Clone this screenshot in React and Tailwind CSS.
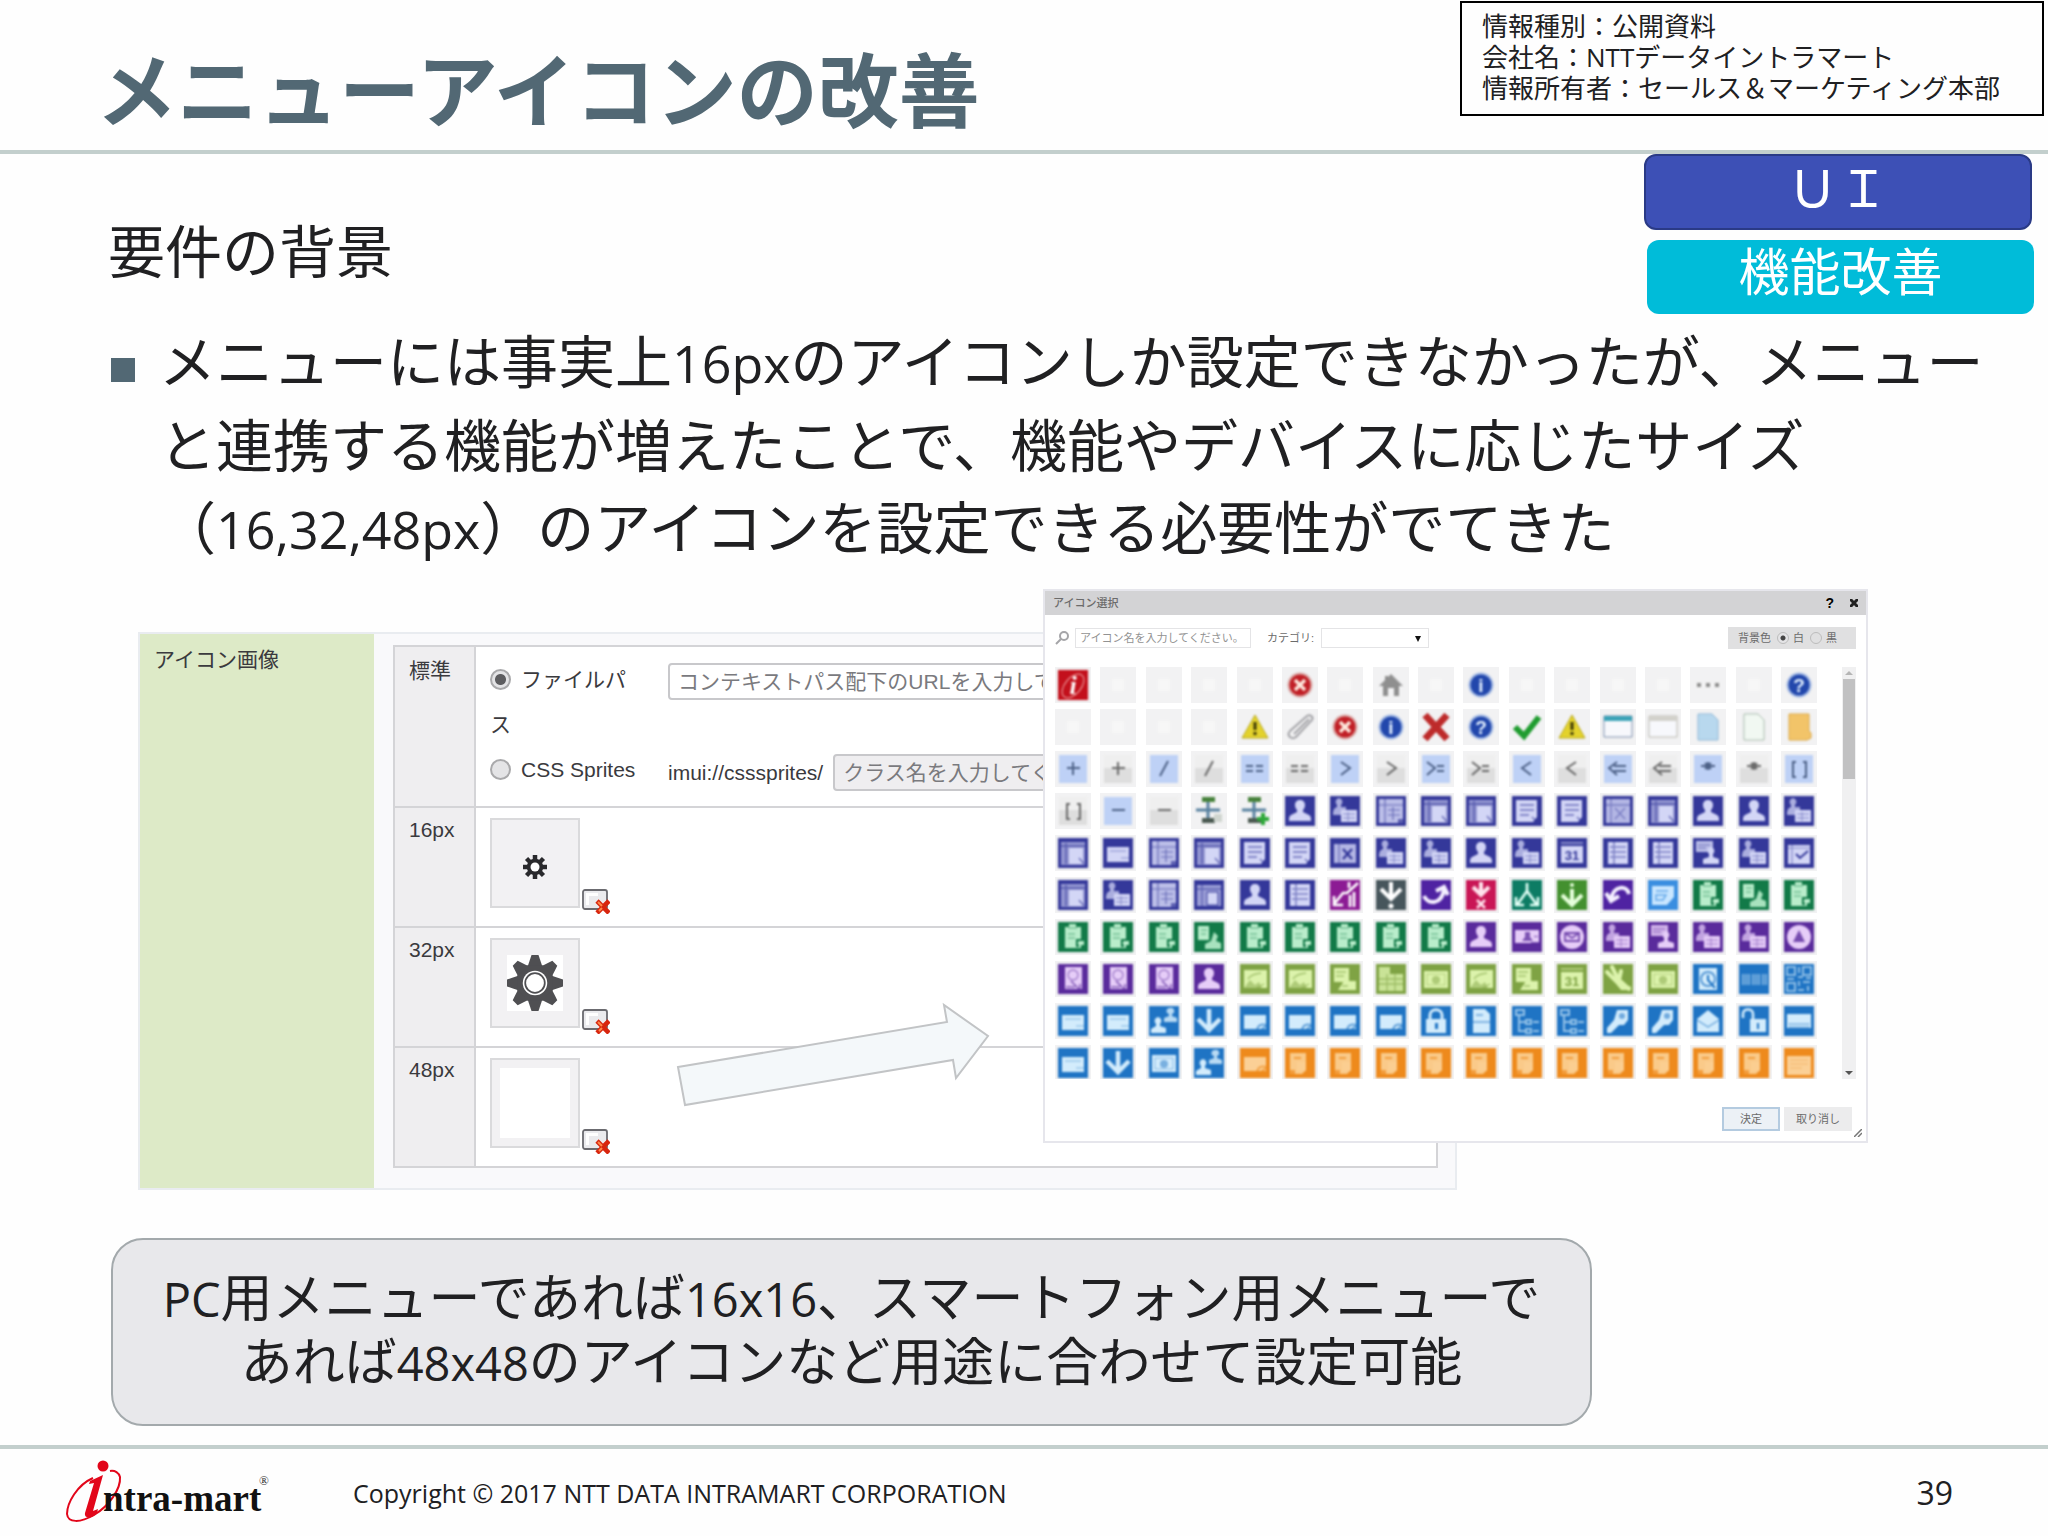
import React, { useState } from "react";
import clsx from "clsx";

const JP = "font-['Open_Sans','Noto_Sans_CJK_JP',sans-serif]";
const UI = "font-['Liberation_Sans','Noto_Sans_CJK_JP',sans-serif]";

/* background and glyph colour of each tile family */
const TONES = {
    navy:    ["#34389a", "#d3d6f6"],
    green:   ["#127a48", "#b9edcb"],
    purple:  ["#5a2b9c", "#e6cdf8"],
    lime:    ["#7fa344", "#dcf3ac"],
    blue:    ["#1f74c4", "#d3ecfc"],
    orange:  ["#ee8a1c", "#fbd096"],
    magenta: ["#8c1b94", "#ffffff"],
    slate:   ["#47565c", "#ffffff"],
    violet:  ["#4f23a2", "#f4efff"],
    crimson: ["#c91655", "#ffe3ec"],
    teal:    ["#0d7c64", "#e2fff6"],
    leaf:    ["#43902f", "#e6ffdb"],
    sky:     ["#3a8ee0", "#c9e6ff"],
};

const ROWS = [
    "im blank blank blank blank error blank home blank info blank blank blank blank dots blank help",
    "blank blank blank blank warn clip error info cross help tick warn window:c window:g page:b page:g folder",
    "op:plus:b op:plus:g op:slash:b op:slash:g op:eq:b op:eq:g op:gt:b op:gt:g op:ge:b op:ge:g op:lt:b op:lt:g op:le:b op:le:g op:star:b op:star:g op:brackets:b",
    "op:brackets:g op:minus:b op:minus:g flow flow:add navy:user navy:userTable navy:table navy:side navy:side navy:list navy:list navy:mesh navy:side navy:user navy:user navy:userTable",
    "navy:side navy:win navy:table navy:side navy:list navy:list navy:winX navy:userTable navy:userTable navy:user navy:userTable navy:cal navy:rows navy:rows navy:note navy:userTable navy:winCheck",
    "navy:side navy:userTable navy:table navy:bin navy:user navy:rows magenta:zig slate:downDot violet:redo crimson:downX teal:split leaf:dotDown violet:undo sky:memo green:board green:boardUser green:board",
    "green:board green:board green:board green:boardUser green:board green:board green:board green:board green:board purple:user purple:card purple:mailRound purple:userTable purple:note purple:userTable purple:userTable purple:roundA",
    "purple:doc purple:doc purple:doc purple:user lime:pic lime:pic lime:memoStep lime:sheet lime:money lime:pic lime:memoStep lime:cal lime:hand lime:money blue:clock blue:barcode blue:qr",
    "blue:win blue:win blue:users blue:down blue:winEdit blue:winEdit blue:winEdit blue:winEdit blue:lock blue:file blue:tree blue:tree blue:key blue:key blue:mail blue:unlock blue:keys",
    "blue:win blue:down blue:money blue:users orange:winEdit orange:slip orange:slip orange:slip orange:slip orange:slip orange:slip orange:slip orange:slip orange:slip orange:slip orange:slip orange:form",
].map((row) => row.split(" "));

const glyphs = {
    user: (l) => <path fill={l} d="M15 4c3 0 5 2 5 5 0 2-1 4-2 5v2l6 3c2 1 2 3 2 6H4c0-3 0-5 2-6l6-3v-2c-1-1-2-3-2-5 0-3 2-5 5-5z" />,
    userTable: (l, b) => (
        <>
            <path fill={l} d="M9 2a4 4 0 0 1 2 7v2h5v8H3c0-5 1-7 4-8V9a4 4 0 0 1 2-7z" opacity=".75" />
            <path fill={l} d="M11 14h16v12H11z" />
            <path stroke={b} strokeWidth="1" d="M13 18h12M13 22h12M18 16v9" opacity=".5" />
        </>
    ),
    table: (l, b) => (
        <>
            <path fill={l} d="M3 3h24v24H3z" opacity=".85" />
            <path stroke={b} strokeWidth="1.2" d="M3 9h24M9 3v24M12 14h12M12 19h12M17 11v13" opacity=".6" />
            <path fill={b} d="M22 23h5v4h-5z" opacity=".7" />
        </>
    ),
    side: (l, b) => (
        <>
            <path fill={l} d="M3 4h24v23H3z" opacity=".6" />
            <path fill={l} d="M11 10h14v16H11z" />
            <path stroke={b} strokeWidth="1.4" d="M8 5v21M3 8h24M21 20l5 6" opacity=".65" />
        </>
    ),
    list: (l, b) => (
        <>
            <path fill={l} d="M4 4h21v17l-4 5H4z" />
            <path stroke={b} strokeWidth="1.4" d="M8 9h14M8 14h14M8 19h9M20 21l5 5" opacity=".65" />
        </>
    ),
    mesh: (l, b) => (
        <>
            <path fill={l} d="M3 3h24v24H3z" opacity=".8" />
            <path stroke={b} strokeWidth="1.3" d="M8 3v24M3 9h24M12 12l10 11M22 12L12 23" opacity=".45" />
        </>
    ),
    win: (l, b) => (
        <>
            <path fill={l} d="M4 9h22v15H4z" />
            <path stroke={b} strokeWidth="1.2" d="M7 13h16M18 20h8" opacity=".45" />
        </>
    ),
    winEdit: (l, b) => (
        <>
            <path fill={l} d="M4 9h22v14H4z" />
            <path stroke={b} strokeWidth="2" fill="none" d="M17 24c1-6 6-6 9-5M21 24l5-4" opacity=".65" />
        </>
    ),
    winX: (l, b) => (
        <>
            <path fill={l} d="M4 6h22v19H4z" opacity=".8" />
            <path stroke={b} strokeWidth="1.4" d="M9 6v19" opacity=".5" />
            <path stroke={b} strokeWidth="2.4" d="M13 11l9 10M22 11l-9 10" />
        </>
    ),
    winCheck: (l, b) => (
        <>
            <path fill={l} d="M4 7h22v19H4z" />
            <path stroke={b} strokeWidth="1.2" d="M8 7v19M4 10h22" opacity=".5" />
            <path fill="none" stroke={b} strokeWidth="2" d="M12 16l4 4 8-7" />
        </>
    ),
    cal: (l, b) => (
        <>
            <path fill={l} d="M4 8h22v17H4z" />
            <path stroke={l} strokeWidth="1.5" d="M4 5h22" opacity=".7" />
            <text x="15" y="22" textAnchor="middle" fontSize="13" fontWeight="700" fill={b}>31</text>
        </>
    ),
    rows: (l, b) => (
        <>
            <path fill={l} d="M5 4h20v22H5z" />
            <path stroke={b} strokeWidth="1.5" d="M7 9h16M7 14h16M7 19h16M11 4v22" opacity=".55" />
        </>
    ),
    note: (l, b) => (
        <>
            <path fill={l} d="M3 3h17v11H3z" opacity=".85" />
            <path stroke={b} strokeWidth="1.2" d="M5 7h12M5 10h8" opacity=".6" />
            <path fill={l} d="M18 9a4 4 0 0 1 2 7v3l6 2v5H10v-5l6-2v-3a4 4 0 0 1 2-7z" />
        </>
    ),
    bin: (l, b) => (
        <>
            <path fill={l} d="M3 5h24v21H3z" opacity=".65" />
            <path stroke={b} strokeWidth="1.3" d="M8 5v21M3 9h24" opacity=".6" />
            <path fill={l} stroke={b} d="M13 12h11v13H13z" />
        </>
    ),
    zig: (l) => <path fill="none" stroke={l} strokeWidth="2.6" d="M28 3L17 13h-4L5 23M4 16v9h9M20 27V15M19 8V2M24 27V12" />,
    downDot: (l) => (
        <>
            <path fill="none" stroke={l} strokeWidth="4" d="M15 2v16M5 9l10 10 10-10" />
            <circle cx="15" cy="26" r="2.5" fill={l} />
        </>
    ),
    dotDown: (l) => (
        <>
            <circle cx="15" cy="5" r="2" fill={l} />
            <path fill="none" stroke={l} strokeWidth="4" d="M15 9v15M5 15l10 10 10-10" />
        </>
    ),
    down: (l) => <path fill="none" stroke={l} strokeWidth="4.5" d="M15 3v20M4 13l11 11 11-11" />,
    downX: (l) => (
        <>
            <path fill="none" stroke={l} strokeWidth="4" d="M15 2v11M7 7l8 8 8-8" />
            <path stroke={l} strokeWidth="2.5" d="M11 20l8 8M19 20l-8 8" />
        </>
    ),
    redo: (l) => <path fill="none" stroke={l} strokeWidth="4" d="M3 16c4 9 18 9 20-7M15 11l8-4 4 8" />,
    undo: (l) => <path fill="none" stroke={l} strokeWidth="4" d="M26 14C24 5 11 5 8 19M3 13l5 8 8-5" />,
    split: (l) => <path fill="none" stroke={l} strokeWidth="2.6" d="M15 3v8L5 25M15 11l10 14M4 17v8h8M26 17v8h-8" />,
    memo: (l, b) => (
        <>
            <path fill={l} d="M4 6h22v11l-7 8H4z" />
            <path fill="none" stroke={b} strokeWidth="1.5" d="M8 11h12M8 15h10l-3 5H8z" opacity=".7" />
        </>
    ),
    memoStep: (l, b) => (
        <>
            <path fill={l} d="M4 4h15v14H4zM14 17h12v9H8z" />
            <path stroke={b} strokeWidth="1.4" d="M6 8h10M6 12h8M12 22h6" opacity=".6" />
        </>
    ),
    board: (l, b) => (
        <>
            <path fill={l} d="M7 5h4V2h7v3h5v21H7z" />
            <path stroke={b} strokeWidth="1.2" d="M10 6h9M10 12h7M10 16h7" opacity=".6" />
            <path fill={b} d="M18 17h6v5h-3v3h-3z" />
            <path fill={l} d="M20 19h6v4h-6z" />
        </>
    ),
    boardUser: (l, b) => (
        <>
            <path fill={l} d="M4 4h11v14H4z" />
            <path stroke={b} d="M7 8h6M7 12h5" opacity=".6" />
            <path fill={l} d="M20 10l4 4-2 5 5 2v6H11v-5l6-3z" opacity=".9" />
        </>
    ),
    doc: (l, b) => (
        <>
            <path fill={l} d="M7 3h17v22H7z" />
            <circle cx="15" cy="11" r="5" fill="none" stroke={b} strokeWidth="1.3" opacity=".5" />
            <path stroke={b} strokeWidth="1.6" d="M8 23h9M13 17l9 9M22 20v7" opacity=".7" />
        </>
    ),
    card: (l, b) => (
        <>
            <path fill={l} d="M3 8h24v13H3z" />
            <path fill={b} d="M13 10h5v5l3 4H10l3-4zM22 14h4v1h-4zM19 20h9v4h-9z" opacity=".75" />
        </>
    ),
    mailRound: (l, b) => (
        <>
            <circle cx="15" cy="15" r="12" fill={l} />
            <path fill="none" stroke={b} strokeWidth="1.8" d="M8 11h14v8H8zM8 11l7 5 7-5" opacity=".8" />
        </>
    ),
    roundA: (l, b) => (
        <>
            <circle cx="15" cy="15" r="12" fill={l} />
            <path fill={b} d="M15 8l6 12H9z" opacity=".8" />
        </>
    ),
    pic: (l, b) => (
        <>
            <path fill={l} d="M4 6h23v18H4z" />
            <path fill={b} d="M4 24l6-8 5 5 4-3 3 6z" opacity=".5" />
            <path stroke={b} strokeWidth="1.4" d="M8 15c4-6 9-5 13-6M17 24l7-4" fill="none" opacity=".6" />
        </>
    ),
    sheet: (l, b) => (
        <>
            <path fill={l} d="M3 10h24v17H3zM3 3h11v7H3z" opacity=".8" />
            <path stroke={b} strokeWidth="1.3" d="M3 15h24M3 20h24M11 10v17M19 10v17" opacity=".6" />
        </>
    ),
    money: (l, b) => (
        <>
            <path fill={l} d="M3 7h24v17H3z" />
            <circle cx="15" cy="16" r="4" fill={b} opacity=".5" />
            <path fill="none" stroke={b} d="M6 10h18v11H6z" opacity=".4" />
        </>
    ),
    hand: (l) => <path fill="none" stroke={l} strokeWidth="4" strokeLinecap="round" d="M4 8l10 10M9 3l6 12M18 7l-2 9M14 18l5 6h7M16 16l10 9" />,
    clock: (l, b) => (
        <>
            <path fill={l} d="M6 4h18v22H6z" />
            <circle cx="15" cy="15" r="7" fill="none" stroke={b} strokeWidth="2" opacity=".7" />
            <path stroke={b} strokeWidth="2" d="M15 11v5l7 8" fill="none" />
        </>
    ),
    barcode: (l) => <path stroke={l} strokeWidth="1.6" d="M4 10v11M7 10v11M10 10v11M14 10v11M17 10v11M20 10v11M24 10v11M27 10v11" opacity=".65" />,
    qr: (l) => (
        <path
            fill="none"
            stroke={l}
            strokeWidth="2"
            opacity=".6"
            d="M3 3h8v8H3zM19 3h8v8h-8zM3 19h8v8H3zM15 3v6M14 13h5M3 15h7M22 14h5M15 17v5M19 18h7M14 26h6M24 22v5"
        />
    ),
    users: (l) => (
        <>
            <path fill={l} d="M9 11a4 4 0 0 1 2 7v2l6 2v5H2v-4l5-3v-2a4 4 0 0 1 2-7z" />
            <path fill={l} d="M21 2a3 3 0 0 1 2 6v2l5 2v4H15v-4l5-2V8a3 3 0 0 1 1-6z" opacity=".85" />
        </>
    ),
    lock: (l, b) => (
        <>
            <path fill="none" stroke={l} strokeWidth="3" d="M9 14V9c0-7 12-7 12 0v5" />
            <path fill={l} d="M5 13h20v14H5z" />
            <path fill={b} d="M14 17h3v6h-3z" />
        </>
    ),
    unlock: (l, b) => (
        <>
            <path fill="none" stroke={l} strokeWidth="2.6" d="M4 12V8c0-6 10-6 10 0v6" />
            <path fill={l} d="M11 13h16v13H11z" />
            <path fill={b} d="M18 17h2v6h-2z" />
        </>
    ),
    file: (l, b) => (
        <>
            <path fill={l} d="M7 3h12l5 5v19H7z" />
            <path stroke={b} strokeWidth="1.5" d="M7 16h17M10 9h7" opacity=".6" />
        </>
    ),
    tree: (l) => <path fill="none" stroke={l} strokeWidth="2" d="M4 4h8v5H4zM7 9v16h7M7 16h7M14 14h5v4h-5zM14 23h5v4h-5zM21 16h6M21 25h6" opacity=".65" />,
    key: (l, b) => (
        <>
            <path fill={l} d="M14 4h11v10l-4 5h-5l-8 8H4v-5l7-8z" />
            <circle cx="19" cy="10" r="3" fill={b} opacity=".55" />
        </>
    ),
    mail: (l, b) => (
        <>
            <path fill={l} d="M4 13l11-9 11 9v13H4z" />
            <path fill="none" stroke={b} strokeWidth="1.4" d="M4 14l11 7 11-7" opacity=".6" />
        </>
    ),
    keys: (l, b) => (
        <>
            <path fill={l} d="M3 8h24v14H3z" />
            <path stroke={b} strokeWidth="2" strokeDasharray="2 1" d="M5 18h20M5 21h20" opacity=".5" />
        </>
    ),
    slip: (l, b) => (
        <>
            <path fill={l} d="M5 5h16v17l-4 4H5z" opacity=".9" />
            <path fill={b} d="M4 22h6v6H4zM9 9h7v2H9z" opacity=".7" />
            <path fill={l} d="M12 14h9v9h-9z" opacity=".6" />
        </>
    ),
    form: (l, b) => (
        <>
            <path fill={l} d="M3 8h24v19H3z" />
            <path stroke={b} strokeWidth="1.2" d="M6 12h18M6 16h18M6 20h12" opacity=".35" />
        </>
    ),
};

const OPS = {
    plus: "M15 8v13M9 14h13",
    minus: "M9 14h13",
    slash: "M19 7l-8 15",
    eq: "M6 12h7M6 17h7M16 12h7M16 17h7",
    gt: "M11 8l9 6-9 7",
    ge: "M6 8l8 6-8 7M16 12h7M16 17h7",
    lt: "M19 8l-9 6 9 7",
    le: "M14 8l-8 6 8 7M11 12h12M11 17h12",
    star: "M8 12h14M15 8v8M12 9l6 6M18 9l-6 6",
    brackets: "M12 8H9v15h3M19 8h3v15h-3",
};

const Badge = ({ fill, ring, children }) => (
    <>
        <circle cx="15" cy="15" r="12.5" fill={ring} />
        <circle cx="15" cy="15" r="10.5" fill={fill} />
        {children}
    </>
);

const Picture = ({ name, arg, tint }) => {
    switch (name) {
        case "im":
            return (
                <>
                    <path fill="#c3101c" d="M0 0h30v30H0z" />
                    <ellipse cx="15" cy="16" rx="14" ry="8" fill="none" stroke="#f0a9a9" transform="rotate(-50 15 16)" />
                    <text x="15" y="24" textAnchor="middle" fontSize="26" fontStyle="italic" fontWeight="700" fontFamily="Liberation Serif" fill="#fff">i</text>
                </>
            );
        case "error":
            return (
                <Badge fill="#c11f26" ring="#d9a5a2">
                    <path stroke="#fde8dd" strokeWidth="3.4" d="M10 10l10 10M20 10L10 20" />
                </Badge>
            );
        case "info":
        case "help":
            return (
                <Badge fill="#2247ac" ring="#9fb6e2">
                    <text x="15" y="22" textAnchor="middle" fontSize="19" fontWeight="700" fill="#e4f1ff">{name === "info" ? "i" : "?"}</text>
                </Badge>
            );
        case "home":
            return <path fill="#8f8f8f" d="M15 4l12 12h-4v10h-5v-8h-6v8H7V16H3L9 10V6h3v1z" />;
        case "warn":
            return (
                <>
                    <path fill="#e3d22c" stroke="#b9a91c" d="M15 3l13 23H2z" />
                    <path stroke="#3b3706" strokeWidth="3" d="M15 10v8M15 20v3" />
                </>
            );
        case "clip":
            return <path fill="none" stroke="#a4a4a8" strokeWidth="2" d="M22 4L5 19c-4 5 2 9 6 6L27 8c2-3-2-6-5-4zM9 22L24 7" />;
        case "cross":
            return <path stroke="#bd2a2a" strokeWidth="7" d="M4 3l22 24M26 3L4 27" />;
        case "tick":
            return <path fill="none" stroke="#1f9c2f" strokeWidth="6" d="M3 15l9 9L27 5" />;
        case "dots":
            return <path fill="#8d8d8d" d="M4 13h4v4H4zM13 13h4v4h-4zM22 13h4v4h-4z" />;
        case "window":
            return (
                <>
                    <path fill="#f7f8fc" stroke={arg === "c" ? "#7c8fae" : "#b9b8b0"} d="M1 4h28v21H1z" />
                    <path fill={arg === "c" ? "#3ba3b7" : "#d2d1cb"} d="M1 4h28v5H1z" />
                </>
            );
        case "page":
            return <path fill={arg === "b" ? "#b8d8ee" : "#f1f8f2"} stroke={arg === "b" ? "#8fb7d6" : "#a9bcae"} d="M5 2h14l6 6v20H5z" />;
        case "folder":
            return <path fill="#f2c469" stroke="#dba848" d="M5 2h20v17l2 2v5l-4 2H5z" />;
        case "flow":
            return (
                <>
                    <path stroke="#57809f" strokeWidth="3" d="M2 14h24M14 6v18" />
                    <path fill="#47823c" d="M8 1h13v5H8z" />
                    <path fill="#4b5a52" d="M8 22h13v5H8z" />
                    {arg === "add"
                        ? <path stroke="#2fa83a" strokeWidth="4" d="M23 17v12M17 23h12" />
                        : <path fill="#cfd5cf" d="M20 18h8v8h-8z" />}
                </>
            );
        case "op":
            return (
                <>
                    <path fill={tint === "b" ? "#bed1f6" : "#dedede"} d="M1 1h28v28H1z" />
                    <path fill="#fff" d="M1 1h28v13H1z" opacity={tint === "b" ? 0 : 0.5} />
                    <path fill="none" stroke={tint === "b" ? "#4d6187" : "#6a6a6a"} strokeWidth="2" d={OPS[arg]} />
                </>
            );
        default:
            return <path fill="#f7f7f7" d="M9 9h12v12H9z" />;
    }
};

const IconCell = ({ code }) => {
    const [name, arg, tint] = code.split(":");
    const tone = TONES[name];
    return (
        <button type="button" aria-label={code} className="size-9 bg-[#f2f2f3] flex items-center justify-center">
            <svg viewBox="0 0 30 30" className="size-[30px] blur-[1px]">
                {tone ? (
                    <>
                        <path fill={tone[0]} d="M0 0h30v30H0z" />
                        {glyphs[arg](tone[1], tone[0])}
                    </>
                ) : (
                    <Picture name={name} arg={arg} tint={tint} />
                )}
            </svg>
        </button>
    );
};

const radioClass =
    "appearance-none rounded-full border-2 border-[#a9a9ab] bg-[#e4e4e6] checked:bg-[radial-gradient(circle,#5d5d60_5px,#e4e4e6_6px)]";

const IconDialog = () => {
    const [tone, setTone] = useState("white");

    return (
        <section
            aria-label="アイコン選択"
            className={clsx("absolute left-[905px] -top-[43px] z-10 w-[825px] bg-white border-2 border-[#e6e6ec] text-[11px] leading-4 text-[#6b6b6b]", UI)}
        >
            <header className="h-6 pl-2 pr-2 flex items-center justify-between bg-[#d3d3d5]">
                <h3 className="font-medium">アイコン選択</h3>
                <div className="flex items-center gap-4 text-black font-bold">
                    <button type="button" className="text-sm leading-4">?</button>
                    <button type="button" aria-label="閉じる" className="size-2">
                        <svg viewBox="0 0 8 8" className="size-2">
                            <path stroke="#222" strokeWidth="3" d="M0 0l8 8M8 0L0 8" />
                        </svg>
                    </button>
                </div>
            </header>

            {/* filter bar */}
            <div className="mt-3 pl-2.5 pr-2.5 h-[22px] flex items-center">
                <svg viewBox="0 0 14 14" className="size-3.5 mr-1.5" fill="none" stroke="#a5a5a8" strokeWidth="2">
                    <circle cx="9" cy="5" r="4" />
                    <path d="M6 8l-5 5" />
                </svg>
                <input
                    aria-label="アイコン名"
                    placeholder="アイコン名を入力してください。"
                    className="w-[176px] h-5 pl-1 border border-[#e4e4e6] placeholder:text-[#929292]"
                />
                <label htmlFor="category" className="ml-4 mr-1 w-[50px] whitespace-nowrap">カテゴリ:</label>
                <span className="relative flex">
                    <select id="category" className="w-[108px] h-5 appearance-none border border-[#e4e4e6]">
                        <option> </option>
                    </select>
                    <svg viewBox="0 0 6 6" className="absolute right-2 top-2 size-1.5">
                        <path d="M0 0h6L3 6z" fill="#111" />
                    </svg>
                </span>
                <fieldset className="ml-auto h-[22px] w-32 pl-2.5 flex items-center gap-1.5 bg-[#e0e0e1]">
                    <span>背景色</span>
                    {[["white", "白"], ["black", "黒"]].map(([value, label]) => (
                        <label key={value} className="flex items-center gap-1">
                            <input
                                type="radio"
                                name="tone"
                                checked={tone === value}
                                onChange={() => setTone(value)}
                                className="appearance-none size-3 rounded-full border border-[#bcbcbc] checked:bg-[radial-gradient(circle,#444_2px,#e4e4e6_3px)]"
                            />
                            {label}
                        </label>
                    ))}
                </fieldset>
            </div>

            <div className="mt-4.5 pl-2.5 pr-2.5 h-[412px] flex justify-between overflow-hidden">
                <div className="w-[762px] flex flex-col gap-1.5">
                    {ROWS.map((row, r) => (
                        <div key={r} className="flex justify-between">
                            {row.map((code, c) => <IconCell key={c} code={code} />)}
                        </div>
                    ))}
                </div>
                <div className="w-3.5 flex flex-col items-center justify-between bg-[#f0f0f1]">
                    <div className="w-full flex flex-col items-center">
                        <svg viewBox="0 0 8 12" className="h-3 w-2"><path d="M0 8h8L4 4z" fill="#b5b5b5" /></svg>
                        <div className="w-3 h-[100px] bg-[#c1c1c2]" />
                    </div>
                    <svg viewBox="0 0 8 12" className="h-3 w-2"><path d="M0 4h8L4 8z" fill="#555" /></svg>
                </div>
            </div>

            <footer className="mt-7 pr-3.5 pb-2.5 flex justify-end gap-1">
                <button type="button" className="w-[58px] h-6 border-2 border-[#b4cbe0] bg-[#ecf1f6]">決定</button>
                <button type="button" className="w-[68px] h-6 bg-[#ececed]">取り消し</button>
            </footer>
            <svg viewBox="0 0 8 8" className="absolute right-1 bottom-1 size-2" stroke="#777" strokeWidth="1.5">
                <path d="M0 8l8-8M4 8l4-4" />
            </svg>
        </section>
    );
};

const Gear = ({ teeth, hole, className, color }) => (
    <svg viewBox="-16 -16 32 32" className={className}>
        <circle r="11" fill={color} />
        {[0, 45, 90, 135, 180, 225, 270, 315].map((a) => (
            <path key={a} d={teeth} fill={color} transform={`rotate(${a})`} />
        ))}
        <circle r={hole} fill="#fff" />
    </svg>
);

const DeleteIcon = () => (
    <svg viewBox="0 0 28 25" className="h-[25px] w-7">
        <rect x="1" y="1" width="24" height="19" rx="2" fill="#ebebee" stroke="#6b6b70" strokeWidth="1.8" />
        <path d="M4 4h12v3H7v9H4z" fill="#fff" />
        <path d="M15 12l12 12M27 12L15 24" stroke="#d8260f" strokeWidth="4.6" />
        <path d="M16 13l4 4M17 22l3-3" stroke="#ff8a4a" strokeWidth="2" />
    </svg>
);

const SIZES = [
    {
        label: "16px",
        preview: <Gear className="size-6 mt-2" teeth="M-3-9v-7h6v7z" hole={6} color="#29292c" />,
    },
    {
        label: "32px",
        preview: (
            <span className="size-14 bg-white flex relative">
                <Gear className="size-14" teeth="M-4-10l1-3 1-3h4l1 3 1 3z" hole={7} color="#4f4f52" />
                <svg viewBox="-16 -16 32 32" className="absolute size-14">
                    <circle r="5.6" fill="#fff" stroke="#4f4f52" strokeWidth="1" />
                </svg>
            </span>
        ),
    },
    { label: "48px", preview: <span className="size-[70px] bg-white" /> },
];

const SettingPanel = () => {
    const [source, setSource] = useState("file");

    return (
        <div className={clsx("flex border-2 border-[#e9ecf0] bg-[#f9f9fb] text-[21px] leading-6 text-[#3a3a3e]", UI)}>
            <div className="w-[234px] shrink-0 pl-3.5 pt-3.5 bg-[#ddeac7]">アイコン画像</div>
            <div className="flex-1 pl-[19px] pr-[17px] pt-[11px] pb-5">
                <table className="w-full border-collapse bg-white">
                    <tbody>
                        <tr className="h-[161px]">
                            <th className="w-[81px] border-2 border-[#d4d4d7] bg-[#efeef0] pl-3.5 pt-3 text-left align-top font-normal">標準</th>
                            <td className="border-2 border-[#d4d4d7] pl-3.5 pt-2.5 align-top">
                                <div className="flex">
                                    <div className="w-[150px] leading-[45px]">
                                        <label className="block">
                                            <input type="radio" name="source" checked={source === "file"} onChange={() => setSource("file")} className={clsx(radioClass, "size-[21px] mr-2.5 align-[-3px]")} />
                                            ファイルパス
                                        </label>
                                        <label className="block">
                                            <input type="radio" name="source" checked={source === "sprites"} onChange={() => setSource("sprites")} className={clsx(radioClass, "size-[21px] mr-2.5 align-[-3px]")} />
                                            CSS Sprites
                                        </label>
                                    </div>
                                    <div className="ml-7 pt-1.5 flex flex-col gap-[54px]">
                                        <input
                                            aria-label="ファイルパス"
                                            placeholder="コンテキストパス配下のURLを入力してください"
                                            className="w-[560px] h-[37px] pl-2 rounded border-2 border-[#c8c8cb] placeholder:text-[#7a7a7e]"
                                        />
                                        <div className="flex items-center gap-2.5">
                                            <label htmlFor="sprite">imui://csssprites/</label>
                                            <input
                                                id="sprite"
                                                disabled={source !== "sprites"}
                                                placeholder="クラス名を入力してください"
                                                className="w-[390px] h-[37px] pl-2 rounded border-2 border-[#c8c8cb] bg-[#efeef0] placeholder:text-[#7a7a7e]"
                                            />
                                        </div>
                                    </div>
                                </div>
                            </td>
                        </tr>
                        {SIZES.map(({ label, preview }) => (
                            <tr key={label} className="h-[120px]">
                                <th className="border-2 border-[#d4d4d7] bg-[#efeef0] pl-3.5 pt-2.5 text-left align-top font-normal">{label}</th>
                                <td className="border-2 border-[#d4d4d7] pl-3.5 pt-2.5 align-top">
                                    <div className="flex items-end gap-0.5">
                                        <div className="size-[90px] border-2 border-[#dadadc] bg-[#f2f1f3] flex items-center justify-center">{preview}</div>
                                        <button type="button" aria-label={`${label} 削除`} className="-mb-1.5">
                                            <DeleteIcon />
                                        </button>
                                    </div>
                                </td>
                            </tr>
                        ))}
                    </tbody>
                </table>
            </div>
        </div>
    );
};

const Logo = () => (
    <svg viewBox="0 0 210 64" className="h-16 w-[210px] overflow-visible" role="img" aria-label="intra-mart" fontFamily="Liberation Serif">
        <path
            fill="none"
            stroke="#e2061a"
            strokeWidth="2"
            d="M26 17C10 24 0 42 0 53c1 9 13 9 27 1 15-9 27-26 26-38-1-4-5-7-10-6"
        />
        {/* slanted stem with its serifs, and the dot */}
        <path fill="#e2061a" d="M23 20l13-6-10 36 5-2-1 4c-5 6-13 6-12 0l9-30-5 1z" />
        <circle cx="36" cy="5" r="5.5" fill="#e2061a" />
        <text x="36" y="50" fontSize="37" fontWeight="700" fill="#111">ntra-mart</text>
        <text x="192" y="24" fontSize="13" fill="#333">®</text>
    </svg>
);

const En = ({ children, className }) => <span className={className}>{children}</span>;

export default function App() {
    return (
        <div className={clsx("min-h-screen flex flex-col bg-[#fefefe] text-[#202022]", JP)}>
            <header className="h-[154px] flex items-start justify-between border-b-4 border-[#c3cfcd]">
                <h1 className="pl-24 pt-[30px] text-[81px] leading-[120px] font-bold text-[#526874]">メニューアイコンの改善</h1>
                <div className="mt-px mr-1 w-[584px] pl-5 pt-2 pb-2.5 border-2 border-black text-[26px] leading-[31px] whitespace-nowrap">
                    <p>情報種別：公開資料</p>
                    <p>会社名：NTTデータイントラマート</p>
                    <p>情報所有者：セールス＆マーケティング本部</p>
                </div>
            </header>

            <main className="flex-1 flex flex-col">
                <div className="flex justify-between">
                    <h2 className="pl-[108px] pt-14 text-[57px] leading-[82px]">要件の背景</h2>
                    <div className="pr-3.5 flex flex-col gap-2.5 items-end text-center text-white text-[51px]">
                        <div className="w-[388px] mr-0.5 h-[76px] rounded-xl border-2 border-[#2a3a86] bg-[#3d50b6] leading-[62px]">ＵＩ</div>
                        <div className="w-[387px] h-[74px] rounded-xl bg-[#00bcd9] leading-[62px]">機能改善</div>
                    </div>
                </div>

                <ul className="mt-1.5 pl-[111px]">
                    <li className="flex gap-6 text-[57px] leading-[82px]">
                        <span className="mt-[38px] size-6 shrink-0 bg-[#526874]" />
                        <p className="whitespace-nowrap">
                            メニューには事実上<En className="text-[52px]">16px</En>のアイコンしか設定できなかったが、メニュー
                            <br />
                            と連携する機能が増えたことで、機能やデバイスに応じたサイズ
                            <br />
                            （<En className="text-[52px]">16,32,48px</En>）のアイコンを設定できる必要性がでてきた
                        </p>
                    </li>
                </ul>

                <div className="relative mt-[62px] ml-[138px] w-[1319px]">
                    <SettingPanel />
                    <svg viewBox="0 0 320 110" className="absolute left-[535px] top-[370px] w-80 h-[110px]">
                        <path d="M5 65L274 20 271 3 315 34 283 76 280 58 12 103z" fill="#f4f8fa" stroke="#c2c4c6" strokeWidth="2" />
                    </svg>
                    <IconDialog />
                </div>

                <p className="mt-12 ml-[111px] w-[1481px] h-[188px] pb-1 flex flex-col justify-center text-center rounded-[32px] border-2 border-[#a3a9ac] bg-[#e8e8eb] text-[52px] leading-[61px]">
                    <span><En className="text-[47px]">PC</En>用メニューであれば<En className="text-[47px]">16x16</En>、スマートフォン用メニューで</span>
                    <span>あれば<En className="text-[47px]">48x48</En>のアイコンなど用途に合わせて設定可能</span>
                </p>
            </main>

            <footer className="h-[91px] mt-4 pl-[67px] pr-[95px] flex items-center border-t-4 border-[#c3cfcd]">
                <Logo />
                <p className="ml-[76px] text-[25px] leading-8">Copyright © 2017 NTT DATA INTRAMART CORPORATION</p>
                <p className="ml-auto text-[32px] leading-10">39</p>
            </footer>
        </div>
    );
}
